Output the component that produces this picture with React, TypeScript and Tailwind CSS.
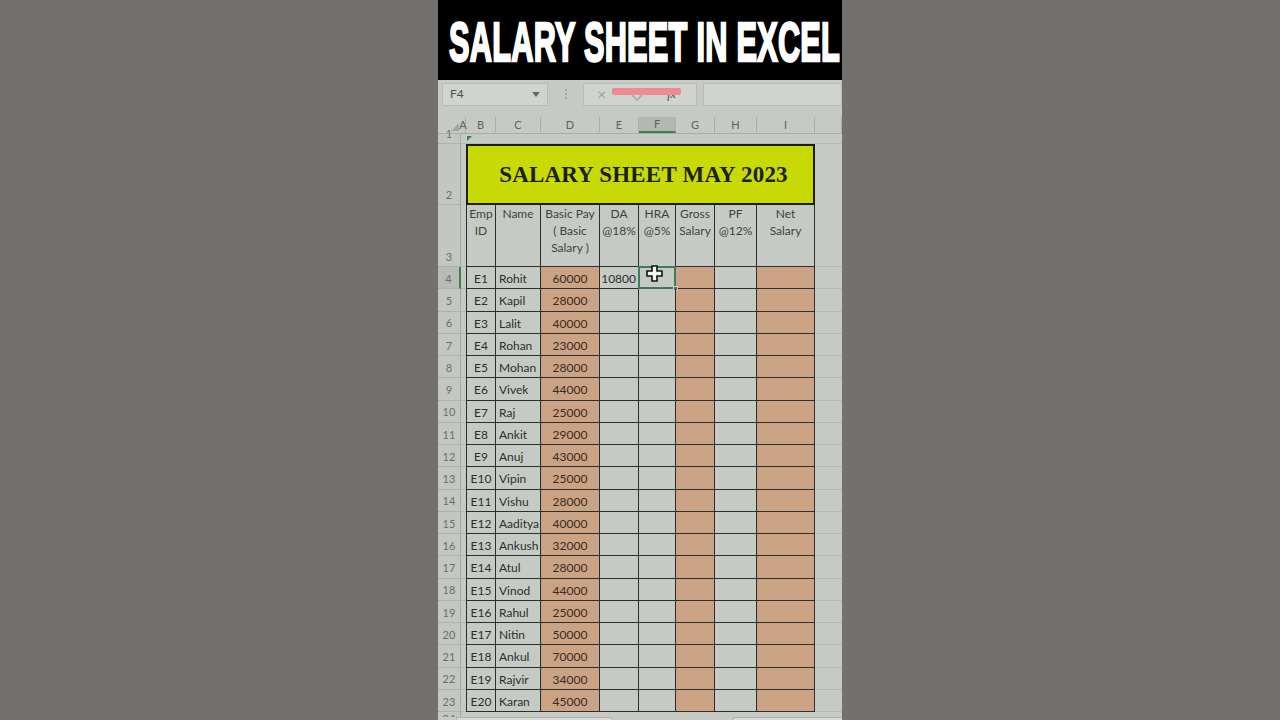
import React from 'react';

const rows = [
  ['E1', 'Rohit', '60000'],
  ['E2', 'Kapil', '28000'],
  ['E3', 'Lalit', '40000'],
  ['E4', 'Rohan', '23000'],
  ['E5', 'Mohan', '28000'],
  ['E6', 'Vivek', '44000'],
  ['E7', 'Raj', '25000'],
  ['E8', 'Ankit', '29000'],
  ['E9', 'Anuj', '43000'],
  ['E10', 'Vipin', '25000'],
  ['E11', 'Vishu', '28000'],
  ['E12', 'Aaditya', '40000'],
  ['E13', 'Ankush', '32000'],
  ['E14', 'Atul', '28000'],
  ['E15', 'Vinod', '44000'],
  ['E16', 'Rahul', '25000'],
  ['E17', 'Nitin', '50000'],
  ['E18', 'Ankul', '70000'],
  ['E19', 'Rajvir', '34000'],
  ['E20', 'Karan', '45000'],
];

const letters = [
  { l: 'A', w: 'w-[5px]' },
  { l: 'B', w: 'w-[30px]' },
  { l: 'C', w: 'w-[45px]' },
  { l: 'D', w: 'w-[59px]' },
  { l: 'E', w: 'w-[39px]' },
  { l: 'F', w: 'w-[37px]' },
  { l: 'G', w: 'w-[39px]' },
  { l: 'H', w: 'w-[42px]' },
  { l: 'I', w: 'w-[58px]' },
  { l: '', w: 'w-[27px]' },
];

function RowHead({ n, active, h }: { n: string; active?: boolean; h: string }) {
  return (
    <div
      className={`w-[23px] ${h} shrink-0 flex items-end justify-center pb-[1px] border-b border-[#adb1ac] text-[11px] text-[#6a6e69] ${
        active ? 'bg-[#b7bcb6] border-r-2 border-r-[#3f7d55]' : 'bg-[#c3c7c2] border-r border-r-[#a6aaa5]'
      }`}
    >
      {n}
    </div>
  );
}

function Cursor() {
  return (
    <svg width="17" height="17" viewBox="0 0 17 17" className="absolute left-[7px] top-[-2px]">
      <path d="M6 1h5v5h5v5h-5v5H6v-5H1V6h5z" fill="#f4f4f0" stroke="#111" strokeWidth="1.6" strokeLinejoin="miter" />
    </svg>
  );
}

export default function App() {
  return (
    <div className="w-[1280px] h-[720px] flex justify-center bg-[#727170] overflow-hidden">
      <div className="w-[404px] h-[720px] flex flex-col bg-[#c6cac5] overflow-hidden font-['Lato','Open_Sans',sans-serif]">
        {/* title banner */}
        <div className="h-[80px] shrink-0 bg-black flex items-center pl-[11px] pt-[4px] overflow-hidden">
          <span className="inline-block whitespace-nowrap origin-left scale-x-[0.548] font-['Liberation_Sans',Arial,sans-serif] font-bold text-[56px] leading-none text-white [-webkit-text-stroke:2.5px_white] tracking-[0.5px]">
            SALARY SHEET IN EXCEL
          </span>
        </div>

        {/* formula bar */}
        <div className="h-[28px] shrink-0 flex items-center pl-[4px]">
          <div className="w-[106px] h-[23px] flex items-center justify-between px-[7px] bg-[#d0d4cf] border border-[#b8bcb7] text-[12px] text-[#4d514c]">
            <span>F4</span>
            <svg width="8" height="5" viewBox="0 0 8 5">
              <path d="M0 0h8L4 5z" fill="#666a65" />
            </svg>
          </div>
          <div className="w-[35px] flex flex-col items-center gap-[2px]">
            <span className="w-[2px] h-[2px] bg-[#a5a9a4]" />
            <span className="w-[2px] h-[2px] bg-[#a5a9a4]" />
            <span className="w-[2px] h-[2px] bg-[#a5a9a4]" />
          </div>
          <div className="relative w-[114px] h-[23px] bg-[#d0d4cf] border border-[#b8bcb7] flex items-center text-[#9fa39e]">
            <span className="ml-[13px] text-[16px] leading-none">×</span>
            <svg width="12" height="8" viewBox="0 0 12 8" className="ml-[25px] mt-[8px]">
              <path d="M1 1l5 5 5-5" fill="none" stroke="#a4a8a3" strokeWidth="1.5" />
            </svg>
            <span className="ml-[24px] text-[12px] italic font-['Liberation_Serif',serif] text-[#444844]">fx</span>
            <div className="absolute left-[28px] top-[4px] w-[69px] h-[7px] rounded-[2px] bg-[#ef8b90]" />
          </div>
          <div className="ml-[6px] flex-1 h-[23px] bg-[#d0d4cf] border border-[#b8bcb7]" />
        </div>

        <div className="h-[9px] shrink-0" />

        {/* column letters */}
        <div className="h-[17px] shrink-0 flex text-[11px] text-[#5d615c] border-b border-[#a9ada8]">
          <div className="w-[23px] shrink-0 flex items-end justify-end pr-[2px] pb-[2px]">
            <svg width="8" height="8" viewBox="0 0 8 8">
              <path d="M8 0v8H0z" fill="#a3a7a2" />
            </svg>
          </div>
          {letters.map((c) => (
            <div
              key={c.l + c.w}
              className={`${c.w} shrink-0 flex items-center justify-center border-r border-[#abafaa] ${
                c.l === 'F' ? 'bg-[#b3b8b2] border-b-2 border-b-[#3f7d55]' : ''
              }`}
            >
              {c.l}
            </div>
          ))}
        </div>

        {/* row 1 */}
        <div className="h-[10px] shrink-0 flex">
          <RowHead n="1" h="h-[10px]" />
          <div className="relative flex-1 border-b border-[#b5b9b4]">
            <svg width="5" height="5" viewBox="0 0 5 5" className="absolute left-[6px] top-[2px]">
              <path d="M0 0h5L0 5z" fill="#2f8a3e" />
            </svg>
          </div>
        </div>

        {/* row 2 - title */}
        <div className="h-[61px] shrink-0 flex">
          <RowHead n="2" h="h-[61px]" />
          <div className="w-[5px] shrink-0" />
          <div className="w-[349px] h-[61px] shrink-0 bg-[#c8da05] border-2 border-[#1c1c1a] flex items-center justify-center pl-[6px] pt-[1px]">
            <span className="font-['Liberation_Serif','Times_New_Roman',serif] font-bold text-[23px] text-[#1d1e14] tracking-[0.2px]">
              SALARY SHEET MAY 2023
            </span>
          </div>
        </div>

        {/* row 3 - headers */}
        <div className="h-[62px] shrink-0 flex text-[12px] leading-[17px] text-[#3e423d] text-center">
          <RowHead n="3" h="h-[62px]" />
          <div className="w-[5px] shrink-0 border-b border-[#b5b9b4]" />
          <div className="w-[30px] shrink-0 border-l border-r border-b border-[#2d2e2c]">Emp<br />ID</div>
          <div className="w-[45px] shrink-0 border-r border-b border-[#2d2e2c]">Name</div>
          <div className="w-[59px] shrink-0 border-r border-b border-[#2d2e2c]">Basic Pay<br />( Basic<br />Salary )</div>
          <div className="w-[39px] shrink-0 border-r border-b border-[#2d2e2c]">DA<br />@18%</div>
          <div className="w-[37px] shrink-0 border-r border-b border-[#2d2e2c]">HRA<br />@5%</div>
          <div className="w-[39px] shrink-0 border-r border-b border-[#2d2e2c]">Gross<br />Salary</div>
          <div className="w-[42px] shrink-0 border-r border-b border-[#2d2e2c]">PF<br />@12%</div>
          <div className="w-[58px] shrink-0 border-r border-b border-[#2d2e2c]">Net<br />Salary</div>
          <div className="w-[27px] shrink-0 border-b border-[#b5b9b4]" />
        </div>

        {/* data rows */}
        {rows.map(([id, name, pay], i) => (
          <div key={id} className="h-[22.25px] shrink-0 flex text-[12px] text-[#2b2e2a]">
            <RowHead n={String(i + 4)} h="h-[22.25px]" active={i === 0} />
            <div className="w-[5px] shrink-0 border-b border-[#b5b9b4]" />
            <div className="w-[30px] shrink-0 flex items-center justify-center pt-[3px] border-l border-r border-b border-[#2d2e2c]">{id}</div>
            <div className="w-[45px] shrink-0 flex items-center pl-[3px] pt-[3px] border-r border-b border-[#2d2e2c] whitespace-nowrap overflow-hidden">{name}</div>
            <div className="w-[59px] shrink-0 flex items-center justify-center pt-[3px] bg-[#c9a383] text-[#3b2a1e] border-r border-b border-[#2d2e2c]">{pay}</div>
            <div className="w-[39px] shrink-0 flex items-center justify-end pr-[2px] pt-[3px] border-r border-b border-[#2d2e2c]">{i === 0 ? '10800' : ''}</div>
            <div className="relative w-[37px] shrink-0 border-r border-b border-[#2d2e2c]">
              {i === 0 && (
                <>
                  <div className="absolute left-[-1px] top-[-1px] right-[-1px] bottom-[-1px] border-2 border-[#3f7d55]" />
                  <div className="absolute right-[-3px] bottom-[-3px] w-[5px] h-[5px] bg-[#3f7d55] border border-[#c9cdc8]" />
                  <Cursor />
                </>
              )}
            </div>
            <div className="w-[39px] shrink-0 bg-[#c9a383] border-r border-b border-[#2d2e2c]" />
            <div className="w-[42px] shrink-0 border-r border-b border-[#2d2e2c]" />
            <div className="w-[58px] shrink-0 bg-[#c9a383] border-r border-b border-[#2d2e2c]" />
            <div className="w-[27px] shrink-0 border-b border-[#b5b9b4]" />
          </div>
        ))}

        {/* row 24 partial + sheet bar */}
        <div className="h-[5px] shrink-0 flex overflow-hidden">
          <div className="w-[23px] h-[5px] shrink-0 bg-[#c3c7c2] border-r border-[#a6aaa5] flex justify-center text-[11px] leading-[14px] text-[#6a6e69]">24</div>
        </div>
        <div className="h-[3px] shrink-0 flex bg-[#c6cac5]">
          <div className="ml-[18px] w-[156px] h-[3px] bg-[#d6d9d5] border-t border-x border-[#aeb2ad]" />
          <div className="ml-[121px] flex-1 h-[3px] bg-[#d6d9d5] border-t border-l border-[#aeb2ad]" />
        </div>
      </div>
    </div>
  );
}
